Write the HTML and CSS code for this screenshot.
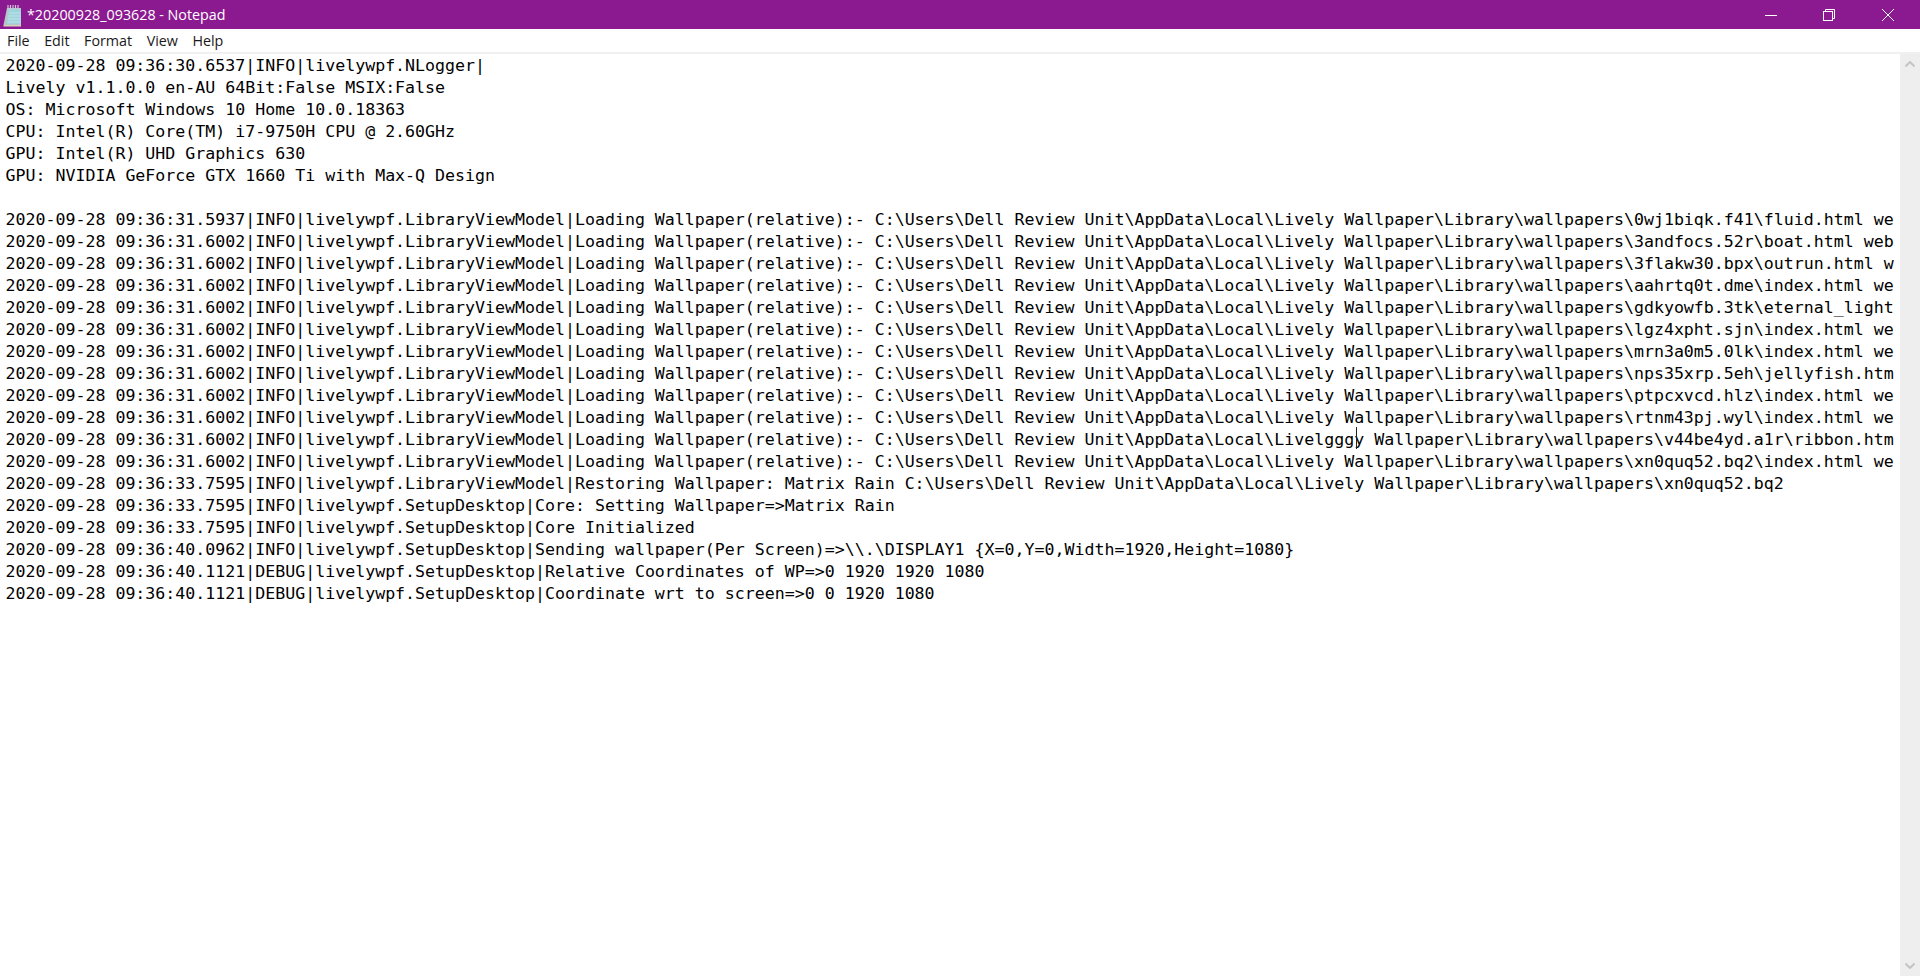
FILE: index.html
```html
<!DOCTYPE html>
<html lang="en">
<head>
<meta charset="utf-8">
<title>*20200928_093628 - Notepad</title>
<link rel="stylesheet" href="styles.css">
</head>
<body>
<div class="window">
  <header class="titlebar">
    <svg class="app-icon" width="20" height="24" viewBox="0 0 20 24">
      <path d="M4 5 H18 V22 H0.500 Z" fill="#b9c3cc"/>
      <path d="M5.500 6 H18 V21 H4 Z" fill="#9fd3dd"/>
      <path d="M6 10 H18 M5.500 13 H18 M5 16 H18 M4.500 19 H18" stroke="#bfe2e8" stroke-width="1"/>
      <path d="M0.500 22 H18 V23.500 H0.500 Z" fill="#d5d3b8"/>
      <path d="M5 2 V6 M7.500 2 V6 M10 2 V6 M12.500 2 V6 M15 2 V6" stroke="#cfc6d6" stroke-width="1.200"/>
    </svg>
    <span class="title">*20200928_093628 - Notepad</span>
    <div class="controls">
      <span class="ctl"><svg width="12" height="12" viewBox="0 0 12 12"><path d="M0 6.500 H12" stroke="#fff" stroke-width="1"/></svg></span>
      <span class="ctl"><svg width="12" height="12" viewBox="0 0 12 12" fill="none" stroke="#fff"><rect x="0.500" y="2.500" width="9" height="9"/><path d="M2.500 2.500 V0.500 H11.500 V9.500 H9.500"/></svg></span>
      <span class="ctl"><svg width="12" height="12" viewBox="0 0 12 12"><path d="M0 0 L12 12 M12 0 L0 12" stroke="#fff" stroke-width="1"/></svg></span>
    </div>
  </header>
  <nav class="menubar">
    <span class="menu">File</span><span class="menu">Edit</span><span class="menu">Format</span><span class="menu">View</span><span class="menu">Help</span>
  </nav>
  <main class="content">
    <pre class="text">2020-09-28 09:36:30.6537|INFO|livelywpf.NLogger|
Lively v1.1.0.0 en-AU 64Bit:False MSIX:False
OS: Microsoft Windows 10 Home 10.0.18363
CPU: Intel(R) Core(TM) i7-9750H CPU @ 2.60GHz
GPU: Intel(R) UHD Graphics 630
GPU: NVIDIA GeForce GTX 1660 Ti with Max-Q Design

2020-09-28 09:36:31.5937|INFO|livelywpf.LibraryViewModel|Loading Wallpaper(relative):- C:\Users\Dell Review Unit\AppData\Local\Lively Wallpaper\Library\wallpapers\0wj1biqk.f41\fluid.html we
2020-09-28 09:36:31.6002|INFO|livelywpf.LibraryViewModel|Loading Wallpaper(relative):- C:\Users\Dell Review Unit\AppData\Local\Lively Wallpaper\Library\wallpapers\3andfocs.52r\boat.html web
2020-09-28 09:36:31.6002|INFO|livelywpf.LibraryViewModel|Loading Wallpaper(relative):- C:\Users\Dell Review Unit\AppData\Local\Lively Wallpaper\Library\wallpapers\3flakw30.bpx\outrun.html w
2020-09-28 09:36:31.6002|INFO|livelywpf.LibraryViewModel|Loading Wallpaper(relative):- C:\Users\Dell Review Unit\AppData\Local\Lively Wallpaper\Library\wallpapers\aahrtq0t.dme\index.html we
2020-09-28 09:36:31.6002|INFO|livelywpf.LibraryViewModel|Loading Wallpaper(relative):- C:\Users\Dell Review Unit\AppData\Local\Lively Wallpaper\Library\wallpapers\gdkyowfb.3tk\eternal_light
2020-09-28 09:36:31.6002|INFO|livelywpf.LibraryViewModel|Loading Wallpaper(relative):- C:\Users\Dell Review Unit\AppData\Local\Lively Wallpaper\Library\wallpapers\lgz4xpht.sjn\index.html we
2020-09-28 09:36:31.6002|INFO|livelywpf.LibraryViewModel|Loading Wallpaper(relative):- C:\Users\Dell Review Unit\AppData\Local\Lively Wallpaper\Library\wallpapers\mrn3a0m5.0lk\index.html we
2020-09-28 09:36:31.6002|INFO|livelywpf.LibraryViewModel|Loading Wallpaper(relative):- C:\Users\Dell Review Unit\AppData\Local\Lively Wallpaper\Library\wallpapers\nps35xrp.5eh\jellyfish.htm
2020-09-28 09:36:31.6002|INFO|livelywpf.LibraryViewModel|Loading Wallpaper(relative):- C:\Users\Dell Review Unit\AppData\Local\Lively Wallpaper\Library\wallpapers\ptpcxvcd.hlz\index.html we
2020-09-28 09:36:31.6002|INFO|livelywpf.LibraryViewModel|Loading Wallpaper(relative):- C:\Users\Dell Review Unit\AppData\Local\Lively Wallpaper\Library\wallpapers\rtnm43pj.wyl\index.html we
2020-09-28 09:36:31.6002|INFO|livelywpf.LibraryViewModel|Loading Wallpaper(relative):- C:\Users\Dell Review Unit\AppData\Local\Livelgggy Wallpaper\Library\wallpapers\v44be4yd.a1r\ribbon.htm
2020-09-28 09:36:31.6002|INFO|livelywpf.LibraryViewModel|Loading Wallpaper(relative):- C:\Users\Dell Review Unit\AppData\Local\Lively Wallpaper\Library\wallpapers\xn0quq52.bq2\index.html we
2020-09-28 09:36:33.7595|INFO|livelywpf.LibraryViewModel|Restoring Wallpaper: Matrix Rain C:\Users\Dell Review Unit\AppData\Local\Lively Wallpaper\Library\wallpapers\xn0quq52.bq2
2020-09-28 09:36:33.7595|INFO|livelywpf.SetupDesktop|Core: Setting Wallpaper=&gt;Matrix Rain
2020-09-28 09:36:33.7595|INFO|livelywpf.SetupDesktop|Core Initialized
2020-09-28 09:36:40.0962|INFO|livelywpf.SetupDesktop|Sending wallpaper(Per Screen)=&gt;\\.\DISPLAY1 {X=0,Y=0,Width=1920,Height=1080}
2020-09-28 09:36:40.1121|DEBUG|livelywpf.SetupDesktop|Relative Coordinates of WP=&gt;0 1920 1920 1080
2020-09-28 09:36:40.1121|DEBUG|livelywpf.SetupDesktop|Coordinate wrt to screen=&gt;0 0 1920 1080</pre>
    <span class="ibeam"></span>
    <aside class="scrollbar">
      <svg width="10" height="6" viewBox="0 0 10 6"><path d="M0.500 5.500 L5 1 L9.500 5.500" fill="none" stroke="#c4c4c4" stroke-width="2"/></svg>
      <svg width="10" height="6" viewBox="0 0 10 6"><path d="M0.500 0.500 L5 5 L9.500 0.500" fill="none" stroke="#c4c4c4" stroke-width="2"/></svg>
    </aside>
  </main>
</div>
</body>
</html>
```
FILE: styles.css
```css
html, body {
  margin: 0;
  height: 100%;
  overflow: hidden;
  background: #fff;
}
.window {
  height: 976px;
  display: flex;
  flex-direction: column;
}
.titlebar {
  height: 29px;
  flex: none;
  display: flex;
  align-items: center;
  background: #8b1a91;
  color: #fff;
  font: 14.300px/29px "Open Sans", "Noto Sans", sans-serif;
  padding-left: 3px;
}
.app-icon {
  flex: none;
  margin-right: 4px;
}
.title {
  flex: 1;
}
.controls {
  display: flex;
  padding-right: 3px;
}
.ctl {
  width: 58.500px;
  height: 29px;
  display: flex;
  align-items: center;
  justify-content: center;
}
.menubar {
  height: 23px;
  flex: none;
  display: flex;
  background: #fff;
  padding-left: 7px;
  gap: 14.500px;
  font: 14.300px/23px "Open Sans", "Noto Sans", sans-serif;
  color: #1a1a1a;
  border-bottom: 2px solid #f0f0f0;
}
.content {
  flex: 1;
  min-height: 0;
  display: flex;
  position: relative;
}
.text {
  flex: 1;
  min-width: 0;
  margin: 0 4px 0 0;
  padding: 1px 0 0 5.500px;
  overflow: hidden;
  font-family: "DejaVu Sans Mono", monospace;
  font-size: 16.600px;
  line-height: 22px;
  color: #000;
  white-space: pre;
}
.ibeam {
  position: absolute;
  left: 1356px;
  top: 373px;
  width: 1px;
  height: 22px;
  background: #222;
}
.scrollbar {
  width: 20px;
  flex: none;
  background: #eeeeee;
  display: flex;
  flex-direction: column;
  align-items: center;
  justify-content: space-between;
  padding: 7px 0;
  box-sizing: border-box;
}
```
